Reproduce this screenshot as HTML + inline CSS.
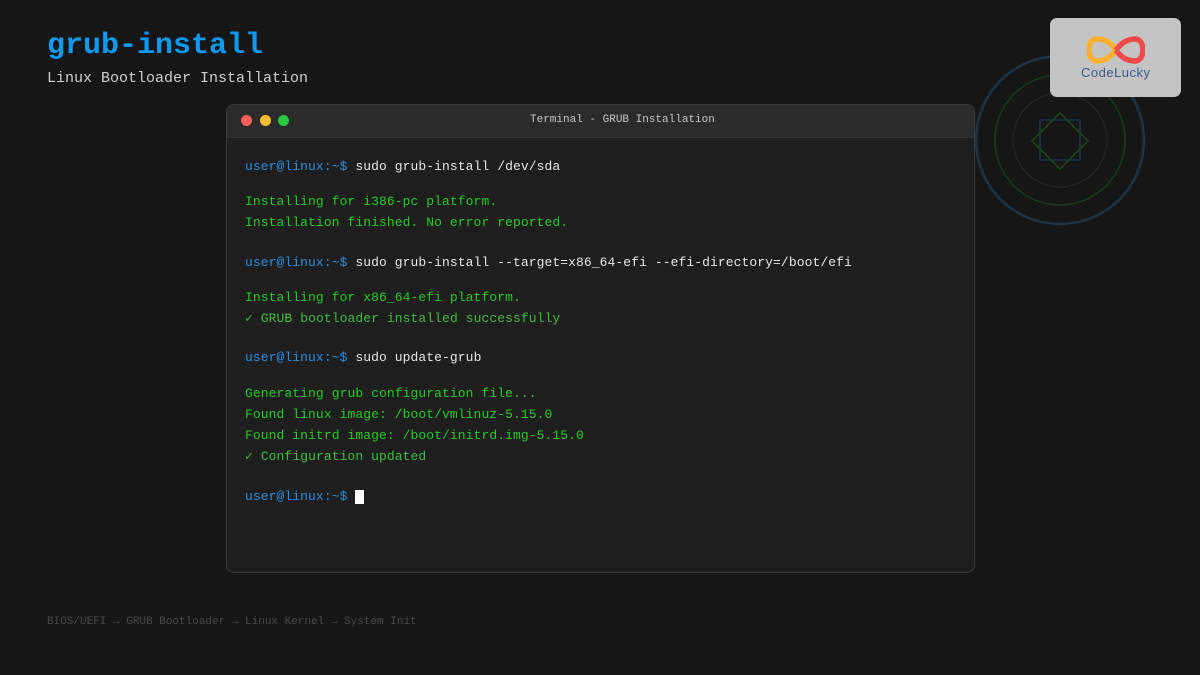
<!DOCTYPE html>
<html><head><meta charset="utf-8"><style>
body{margin:0;width:1200px;height:675px;background:#161616;overflow:hidden;position:relative;font-family:"Liberation Mono",monospace}
.a{position:absolute;white-space:pre;line-height:16px}
.t{font-size:13px;letter-spacing:0.08px}
.p{color:#2a8fe0}.c{color:#e6e6e6}.g{color:#22cc22}.k{color:#3fbf3f}
</style></head><body>
<svg style="position:absolute;left:0;top:0" width="1200" height="675">
<circle cx="1060" cy="140" r="84" fill="none" stroke="#1d3446" stroke-width="2.5"/>
<circle cx="1060" cy="140" r="65" fill="none" stroke="#1f3a22" stroke-width="1.5"/>
<circle cx="1060" cy="140" r="47" fill="none" stroke="#2c2c2c" stroke-width="1"/>
<rect x="1040" y="120" width="40" height="40" fill="none" stroke="#1d3446" stroke-width="1.5"/>
<polygon points="1060,113 1088,141 1060,169 1032,141" fill="none" stroke="#1f4a22" stroke-width="1.5"/>
</svg>
<div class="a" style="left:47px;top:30px;font-size:30px;line-height:32px;font-weight:bold;color:#0a9af2">grub-install</div>
<div class="a" style="left:47px;top:71px;font-size:15px;color:#cfcfcf">Linux Bootloader Installation</div>
<div class="a" style="left:47px;top:614px;font-size:11px;color:#4a4a4a">BIOS/UEFI → GRUB Bootloader → Linux Kernel → System Init</div>
<div style="position:absolute;left:1050px;top:18px;width:131px;height:79px;background:#c4c4c4;border-radius:7px"></div>
<svg style="position:absolute;left:1087px;top:36px" width="58" height="28"><path d="M29 14C23 5 16 3 10 3 4 3 2 8 2 14s3 11 8 11c6 0 13-3 19-11" fill="none" stroke="#ffb030" stroke-width="5.5"/><path d="M29 14c6-8 13-11 19-11 5 0 8 5 8 11s-3 11-8 11c-6 0-13-2-19-11" fill="none" stroke="#f24a4a" stroke-width="5.5"/></svg>
<div class="a" style="left:1081px;top:65px;font-size:13px;font-family:'Liberation Sans',sans-serif;color:#3a5a8a;letter-spacing:.5px">CodeLucky</div>
<div style="position:absolute;left:226px;top:104px;width:747px;height:467px;background:#1e1e1e;border:1px solid #3a3a3a;border-radius:8px;overflow:hidden">
<div style="height:32px;background:#2b2b2b;border-bottom:1px solid #333"></div>
</div>
<div style="position:absolute;left:241px;top:115px;width:11px;height:11px;border-radius:50%;background:#ff5f57"></div>
<div style="position:absolute;left:260px;top:115px;width:11px;height:11px;border-radius:50%;background:#febc2e"></div>
<div style="position:absolute;left:278px;top:115px;width:11px;height:11px;border-radius:50%;background:#28c840"></div>
<div class="a" style="left:530px;top:112px;font-size:11px;color:#c8c8c8">Terminal - GRUB Installation</div>
<div class="a t" style="left:245px;top:159px"><span class="p">user@linux:~$ </span><span class="c">sudo grub-install /dev/sda</span></div>
<div class="a t g" style="left:245px;top:194px">Installing for i386-pc platform.</div>
<div class="a t g" style="left:245px;top:215px">Installation finished. No error reported.</div>
<div class="a t" style="left:245px;top:255px"><span class="p">user@linux:~$ </span><span class="c">sudo grub-install --target=x86_64-efi --efi-directory=/boot/efi</span></div>
<div class="a t g" style="left:245px;top:290px">Installing for x86_64-efi platform.</div>
<div class="a t k" style="left:245px;top:311px">✓ GRUB bootloader installed successfully</div>
<div class="a t" style="left:245px;top:350px"><span class="p">user@linux:~$ </span><span class="c">sudo update-grub</span></div>
<div class="a t g" style="left:245px;top:386px">Generating grub configuration file...</div>
<div class="a t g" style="left:245px;top:407px">Found linux image: /boot/vmlinuz-5.15.0</div>
<div class="a t g" style="left:245px;top:428px">Found initrd image: /boot/initrd.img-5.15.0</div>
<div class="a t k" style="left:245px;top:449px">✓ Configuration updated</div>
<div class="a t" style="left:245px;top:489px"><span class="p">user@linux:~$ </span></div>
<div style="position:absolute;left:355px;top:490px;width:9px;height:14px;background:#fff"></div>
</body></html>
